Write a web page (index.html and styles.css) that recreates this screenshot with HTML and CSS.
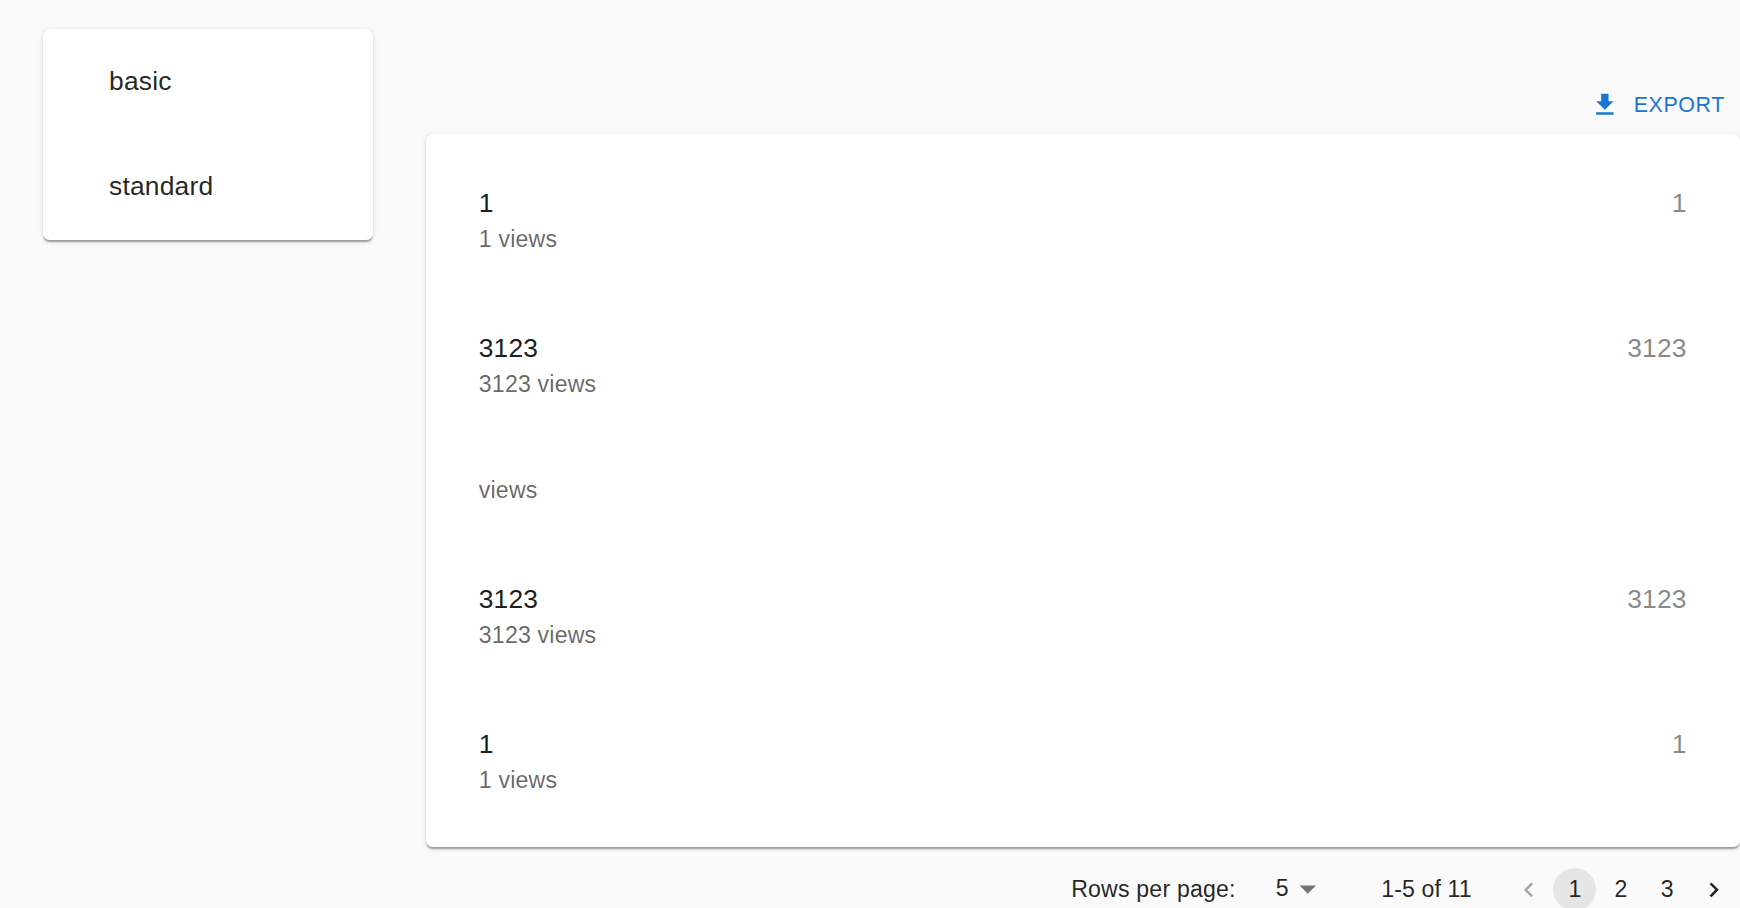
FILE: index.html
```html
<!DOCTYPE html>
<html lang="en">
<head>
    <meta charset="UTF-8">
    <meta name="viewport" content="width=device-width, initial-scale=1.0">
    <title>Posts</title>
    <link rel="stylesheet" href="styles.css">
</head>
<body>
    <div class="page">
        <aside class="paper sidebar">
            <a class="sidebar-item">basic</a>
            <a class="sidebar-item">standard</a>
        </aside>

        <main class="main">
            <div class="toolbar">
                <button class="export">
                    <svg class="export-icon" viewBox="0 0 24 24"><path d="M19 9h-4V3H9v6H5l7 7 7-7zM5 18v2h14v-2H5z"/></svg>
                    <span>EXPORT</span>
                </button>
            </div>

            <ul class="paper list">
                <li class="row">
                    <div>
                        <div class="primary">1</div>
                        <div class="secondary">1 views</div>
                    </div>
                    <span class="tertiary">1</span>
                </li>
                <li class="row">
                    <div>
                        <div class="primary">3123</div>
                        <div class="secondary">3123 views</div>
                    </div>
                    <span class="tertiary">3123</span>
                </li>
                <li class="row">
                    <div>
                        <div class="secondary">views</div>
                    </div>
                </li>
                <li class="row">
                    <div>
                        <div class="primary">3123</div>
                        <div class="secondary">3123 views</div>
                    </div>
                    <span class="tertiary">3123</span>
                </li>
                <li class="row">
                    <div>
                        <div class="primary">1</div>
                        <div class="secondary">1 views</div>
                    </div>
                    <span class="tertiary">1</span>
                </li>
            </ul>

            <div class="pagination">
                <span class="rows-label">Rows per page:</span>
                <div class="rows-select">
                    <span>5</span>
                    <svg viewBox="0 0 24 24"><path d="M7 10l5 5 5-5z"/></svg>
                </div>
                <span class="range">1-5 of 11</span>
                <div class="pages">
                    <button class="page-btn disabled"><svg viewBox="0 0 24 24"><path d="M15.41 7.41L14 6l-6 6 6 6 1.41-1.41L10.83 12z"/></svg></button>
                    <button class="page-btn selected">1</button>
                    <button class="page-btn">2</button>
                    <button class="page-btn">3</button>
                    <button class="page-btn"><svg viewBox="0 0 24 24"><path d="M10 6L8.59 7.41 13.17 12l-4.58 4.59L10 18l6-6z"/></svg></button>
                </div>
            </div>
        </main>
    </div>
</body>
</html>
```

FILE: styles.css
```css
* {
    margin: 0;
    padding: 0;
    box-sizing: border-box;
}

body {
    background: #fafafa;
    color: rgba(0, 0, 0, 0.87);
    font-family: "Liberation Sans", Arial, sans-serif;
    height: 100vh;
    overflow: hidden;
}

button {
    background: none;
    border: none;
    font-family: inherit;
    color: inherit;
    cursor: pointer;
}

svg {
    display: block;
    fill: currentColor;
}

.page {
    display: flex;
    align-items: flex-start;
    gap: 53px;
    padding: 29px 0 0 43px;
}

.paper {
    background: #fff;
    border-radius: 6.6px;
    box-shadow: 0 3.3px 1.65px -1.65px rgba(0, 0, 0, 0.2),
        0 1.65px 1.65px 0 rgba(0, 0, 0, 0.14),
        0 1.65px 4.95px 0 rgba(0, 0, 0, 0.12);
}

.sidebar {
    width: 330px;
    flex-shrink: 0;
}

.sidebar-item {
    display: block;
    padding: 33px 66px;
    font-size: 26.4px;
    line-height: 39.3px;
    letter-spacing: 0.2px;
}

.main {
    flex: 1;
}

.toolbar {
    display: flex;
    justify-content: flex-end;
    height: 105px;
    padding: 54px 15px 0 0;
}

.export {
    display: flex;
    align-items: center;
    gap: 13.8px;
    height: 45px;
    color: #1976d2;
    font-size: 21.45px;
    letter-spacing: 0.6px;
}

.export-icon {
    width: 29.7px;
    height: 29.7px;
    margin-bottom: 1px;
}

.list {
    list-style: none;
    padding: 14px 0 13px;
}

.row {
    display: flex;
    justify-content: space-between;
    padding: 36px 52.8px 37px;
}

.primary,
.tertiary {
    font-size: 26.4px;
    line-height: 38px;
    letter-spacing: 0.15px;
}

.primary {
    margin-bottom: 1px;
    color: rgba(0, 0, 0, 0.9);
}

.tertiary {
    margin-right: 0.6px;
    opacity: 0.54;
}

.secondary {
    color: rgba(0, 0, 0, 0.6);
    font-size: 23.1px;
    line-height: 33px;
    letter-spacing: 0.2px;
}

.pagination {
    display: flex;
    justify-content: flex-end;
    align-items: center;
    height: 85px;
    padding-right: 5.2px;
    font-size: 23.1px;
    letter-spacing: 0.2px;
}

.rows-select {
    display: flex;
    align-items: center;
    margin: 0 53.5px 2px 40px;
}

.rows-select svg {
    width: 39.6px;
    height: 39.6px;
    margin-left: -0.5px;
    color: rgba(0, 0, 0, 0.54);
}

.range {
    letter-spacing: 0.1px;
}

.pages {
    display: flex;
    gap: 3.3px;
    margin-left: 35.5px;
}

.page-btn {
    display: flex;
    align-items: center;
    justify-content: center;
    width: 42.9px;
    height: 42.9px;
    border-radius: 50%;
    font-size: 23.1px;
}

.page-btn svg {
    width: 29.7px;
    height: 29.7px;
}

.page-btn.selected {
    background: rgba(0, 0, 0, 0.08);
}

.page-btn.disabled {
    opacity: 0.38;
}
```
